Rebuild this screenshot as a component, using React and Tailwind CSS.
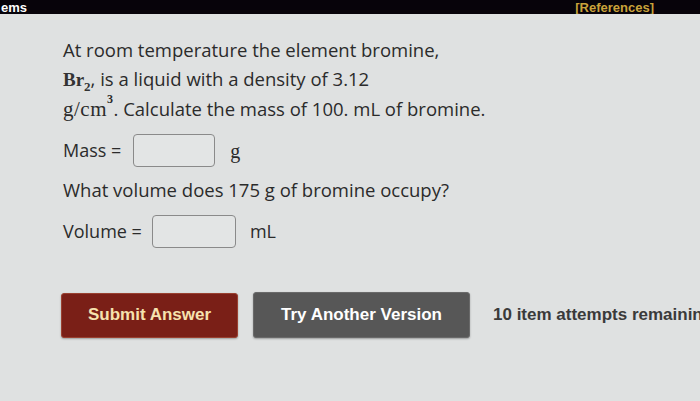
export default function App() {
  return (
    <div className="w-[700px] h-[401px] overflow-hidden bg-[#dfe1e1] relative" style={{ fontFamily: '"Open Sans", sans-serif' }}>
      {/* top bar */}
      <div className="h-[14px] bg-[#07030a] flex justify-between items-end overflow-hidden">
        <span className="ml-[1px] text-white text-[13px] font-semibold leading-[13px]" style={{ fontFamily: '"Liberation Sans", Arial, sans-serif' }}>ems</span>
        <span className="mr-[46px] text-[#c9a23a] text-[13px] font-semibold leading-[13px]" style={{ fontFamily: '"Liberation Sans", Arial, sans-serif' }}>[References]</span>
      </div>

      <div className="pl-[63px] pt-[21px] text-[#2b2b2b]">
        <div className="text-[18.5px] leading-[29px]">
          <p>At room temperature the element bromine,</p>
          <p>
            <span className="font-bold text-[#333] text-[19px]" style={{ fontFamily: '"Liberation Serif", serif' }}>Br<sub className="text-[13px] align-[-2px]">2</sub></span>, is a liquid with a density of 3.12
          </p>
          <p>
            <span className="text-[21px] tracking-[0.5px]" style={{ fontFamily: '"Liberation Serif", serif' }}>g/cm<sup className="text-[12px] align-[7px] font-bold">3</sup></span>. Calculate the mass of 100. mL of bromine.
          </p>
        </div>

        <div className="flex items-center mt-[10px] h-[33px] text-[18px]">
          <span>Mass =</span>
          <div className="ml-[12px] w-[82px] h-[33px] rounded-[4px] border-[1.5px] border-[#8a8a8a] bg-[#e3e5e5]"></div>
          <span className="ml-[15px] text-[20px]" style={{ fontFamily: '"Liberation Serif", serif' }}>g</span>
        </div>

        <p className="mt-[8px] text-[18.5px] leading-[29px]">What volume does 175 g of bromine occupy?</p>

        <div className="flex items-center mt-[11px] h-[33px] text-[18px]">
          <span>Volume =</span>
          <div className="ml-[10px] w-[84px] h-[33px] rounded-[4px] border-[1.5px] border-[#8a8a8a] bg-[#e3e5e5]"></div>
          <span className="ml-[14px]">mL</span>
        </div>
      </div>

      <div className="flex items-center pl-[61px] mt-[44px]" style={{ fontFamily: '"Liberation Sans", Arial, sans-serif' }}>
        <div className="shrink-0 w-[177px] h-[45px] rounded-[3px] bg-[#7a1f17] border border-[#9a4030] flex items-center justify-center text-[#f6e2ae] font-bold text-[17px] shadow-[0_1px_2px_rgba(0,0,0,0.3)]">
          Submit Answer
        </div>
        <div className="shrink-0 ml-[15px] w-[217px] h-[46px] rounded-[3px] bg-[#575757] border border-[#6a6a6a] flex items-center justify-center text-white font-bold text-[17px] shadow-[0_1px_2px_rgba(0,0,0,0.3)]">
          Try Another Version
        </div>
        <span className="ml-[23px] text-[#3a3a3a] font-bold text-[17px] whitespace-nowrap">10 item attempts remaining</span>
      </div>
    </div>
  )
}
